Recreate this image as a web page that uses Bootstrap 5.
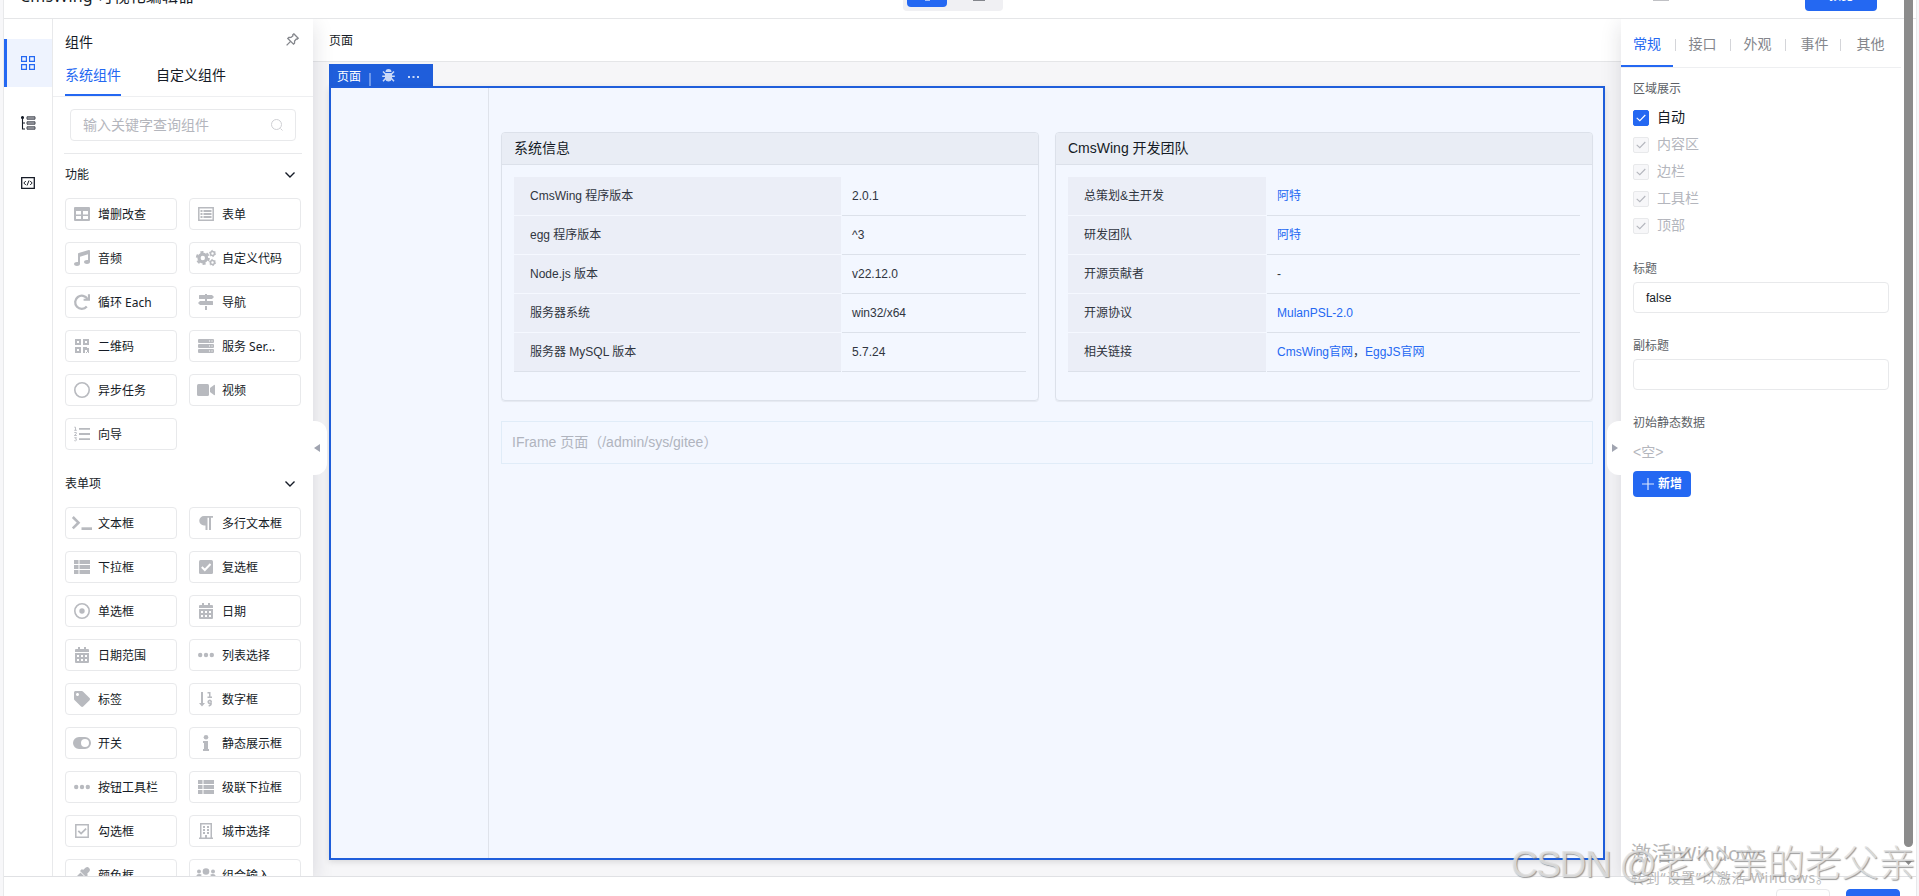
<!DOCTYPE html>
<html lang="zh-CN">
<head>
<meta charset="utf-8">
<title>CmsWing 可视化编辑器</title>
<link href="https://cdn.jsdelivr.net/npm/bootstrap@5.3.0/dist/css/bootstrap.min.css" rel="stylesheet">
<script src="https://cdn.jsdelivr.net/npm/bootstrap@5.3.0/dist/js/bootstrap.bundle.min.js" defer></script>
<style>
:root{--blue:#2468f2;--sel:#1f5edb;--line:#e8e9eb;--ink:#151b26}
html,body{height:100%;overflow:hidden}
body{font:12px/20px "Liberation Sans","Noto Sans CJK SC",sans-serif;color:var(--ink);background:#f7f7f9;padding:0 2px 0 3px}
svg{display:block;flex:none;overflow:visible}
.ui{font-family:"Noto Sans","Noto Sans CJK SC",sans-serif}
.app{height:896px;background:#fff;border-left:1px solid var(--line);border-right:1px solid var(--line)}
.topbar{height:19px;border-bottom:1px solid #e5e6e8;padding-left:16px}
.brand{font-size:16px;letter-spacing:.2px;line-height:20px;margin-top:-14px;width:883px}
.switcher{width:100px;height:32px;margin-top:-21px;padding:4px;background:#f0f0f3;border-radius:4px}
.switcher .on{width:40px;height:24px;background:var(--blue);border-radius:4px}
.glyph{width:5px;height:2px;background:#a8c2fa;margin:16px auto 0}
.switcher .off{width:12px;height:2px;background:#84868c;margin:15px 0 0 26px}
.keys{width:16px;height:2px;background:#c0c1c5;margin-left:650px;margin-top:-1px}
.publish{width:72px;height:32px;margin:-21px 0 0 136px;border-radius:4px;background:var(--blue);color:#fff;font-weight:700;line-height:34px;text-align:center}
.work{height:857px}
.rail{width:49px;border-right:1px solid var(--line);padding-top:20px}
.rail a{height:48px;margin-bottom:12px;border-left:3px solid transparent;padding-right:3px}
.rail a svg{color:var(--ink)}
.rail a.active{background:#eef3fe;border-color:var(--blue)}
.rail a.active svg{color:var(--blue)}
.side{width:260px;position:relative;z-index:2;background:#fff}
.shade{box-shadow:0 6px 20px rgba(30,30,50,.14)}
.side.shade{clip-path:inset(0 -30px 0 0)}
.props.shade{clip-path:inset(0 0 0 -30px)}
.side-in{height:857px;overflow:hidden}
.side-title{height:48px;padding:0 14px 7px 12px;font-size:14px}
.side-tabs{height:30px;gap:35px;padding:0 12px;border-bottom:1px solid #eeeff1;font-size:14px}
.side-tabs span{height:29px;line-height:16px}
.side-tabs .active{color:var(--blue);border-bottom:2px solid var(--blue)}
.finder{margin:12px 17px 0;height:32px;border:1px solid var(--line);border-radius:4px;padding:0 12px;font-size:14px;color:#b4b6bd}
.rule{height:1px;background:var(--line);margin:12px 11px 0}
.sect{height:44px;padding:0 18px 3px 12px}
.sect.two{height:45px;margin-top:12px;padding-bottom:2px}
.tiles{display:grid;grid-template-columns:112px 112px;gap:12px;padding:0 12px}
.tile{height:32px;border:1px solid var(--line);border-radius:4px;padding:1px 0 0 8px;gap:8px;color:var(--ink);white-space:nowrap}
.tile svg{width:16px;height:16px;color:#b8babf;fill:currentColor;margin-top:-2px}
.ln{fill:none!important;stroke:currentColor}
.grip{position:absolute;top:402px;width:14px;height:54px;background:#fff}
.grip.l{right:-14px;border-radius:0 12px 12px 0;z-index:3}
.grip.r{left:-14px;border-radius:12px 0 0 12px}
.grip svg{margin:23px 0 0 1px}.grip.r svg{margin-left:5px}
.stage{width:1308px;background:#f6f6f8;position:relative;z-index:1}
.crumb{height:43px;background:#fff;border-bottom:1px solid #e5e6e8;padding:1px 0 0 16px}
.seltag{width:104px;height:22px;margin:2px 0 0 16px;background:var(--sel);color:#fff;padding-left:8px}
.seltag i{width:2px;height:13px;background:#6d97ea;margin:9px 11px 0 8px}
.frame{height:774px;margin:0 16px;border:2px solid var(--sel);background:#f3f7ff;box-shadow:0 2px 6px rgba(0,0,0,.12)}
.aside{width:158px;border-right:1px solid #dfe3eb}
.content{padding:44px 10px 0 12px;flex:1}
.pair{display:grid;grid-template-columns:538px 538px;gap:16px}
.box{height:269px;border:1px solid #dce1ea;border-radius:4px;box-shadow:0 1px 1px rgba(0,0,0,.06)}
.box h2{height:32px;margin:0;padding:0 12px;border-bottom:1px solid #dce1ea;background:#e9edf5;border-radius:3px 3px 0 0;font-size:14px;line-height:31px;font-weight:400}
.info{margin:12px;display:grid;grid-template-columns:327px 184px;column-gap:1px;color:#303540}
.info.b{grid-template-columns:198px 313px}
.info>div{height:39px;line-height:39px;padding-left:10px;border-bottom:1px solid #dce1ea}
.info>div:nth-child(odd){background:#ebeef7;padding-left:16px;border-color:#f5f8ff}
.info>div:nth-last-child(2){border-color:#dce1ea!important}
.info a{color:var(--blue);text-decoration:none}
.iframe{height:43px;margin-top:20px;border:1px solid #e0ecf8;font-size:14px;line-height:41px;padding-left:10px;color:#b0b4be}
.props{width:280px;position:relative;z-index:2;background:#fff}
.ptabs{height:49px;border-bottom:1px solid #eeeff1;font-size:14px;color:#84868c}
.ptabs span{width:56px;height:48px;line-height:50px;text-align:center}
.ptabs span:first-child{width:53px;color:var(--blue);border-bottom:2px solid var(--blue)}
.ptabs i{width:1px;height:12px;margin:20px -1px 0 0;background:#d4d5d9}
.pbody{padding:0 12px;color:#5c5f66}
.chk{height:27px;gap:8px;font-size:14px;line-height:16px;padding-bottom:2px;color:#b4b6bd}
.chk b{width:16px;height:16px;border:1px solid var(--line);border-radius:2px;background:#f7f7f9;margin-top:2px}
.chk.on{color:var(--ink)}.chk.on b{background:var(--blue);border-color:var(--blue);color:#fff}
.field{height:31px;width:256px;border:1px solid var(--line);border-radius:4px;padding:0 12px;line-height:30px;color:var(--ink)}
.add{width:58px;height:26px;border-radius:4px;background:var(--blue);color:#fff;gap:4px;font-weight:700}
.scroll{width:15px;padding-left:3px}
.scroll div{width:9px;height:847px;margin-top:-19px;background:#8b8b8b;border-radius:0 0 5px 5px}
.foot{height:20px;border-top:1px solid #e0e1e4;padding:12px 16px 0 0;gap:16px;overflow:hidden}
.foot span{width:54px;height:32px;border-radius:4px;border:1px solid var(--line)}
.foot .p{background:var(--blue);border-color:var(--blue)}
.wm{position:absolute;white-space:nowrap;z-index:9}
.win1{left:1631px;top:840px;font-size:20px;letter-spacing:.5px;line-height:28px;color:#b5b5b5}
.win2{left:1631px;top:868px;font-size:14px;letter-spacing:.8px;line-height:20px;color:#b9b9b9}
.csdn{left:1511px;top:838px;font-size:37px;line-height:54px;color:rgba(226,226,226,.85);text-shadow:1px 1px 1px rgba(120,120,120,.75);font-weight:300;font-family:"Liberation Sans","Noto Sans CJK SC",sans-serif}
.csdn span{letter-spacing:-1.400px}
</style>
</head>
<body>
<svg width="0" height="0" class="position-absolute">
<symbol id="list" viewBox="0 0 16 16"><path d="M0 1h4.5v4H0zM5.5 1H16v4H5.5zM0 6h4.5v4H0zM5.5 6H16v4H5.5zM0 11h4.5v4H0zM5.5 11H16v4H5.5z"/></symbol>
<symbol id="cal" viewBox="0 0 16 16"><path fill-rule="evenodd" d="M1 5V3q0-1 1-1h2V0h2v2h4V0h2v2h2q1 0 1 1v2zM1 6h14v9q0 1-1 1H2q-1 0-1-1zM3 8v2h2V8zm4 0v2h2V8zm4 0v2h2V8zm-8 4v2h2v-2zm4 0v2h2v-2zm4 0v2h2v-2z"/></symbol>
<symbol id="dots" viewBox="0 0 16 16"><circle cx="2.2" cy="8" r="2.2"/><circle cx="8" cy="8" r="2.2"/><circle cx="13.8" cy="8" r="2.2"/></symbol>
<symbol id="down" viewBox="0 0 10 6"><path class="ln" d="M.5.5 5 5 9.500.5" stroke-width="1.4"/></symbol>
<symbol id="tick" viewBox="0 0 10 8"><path class="ln" d="M.7 3.800 3.800 6.700 9.300 1" stroke-width="1.1"/></symbol>
</svg>
<div class="app">
<header class="topbar d-flex align-items-start">
  <div class="brand ui">CmsWing 可视化编辑器</div>
  <div class="switcher d-flex"><div class="on"><div class="glyph mt-3"></div></div><div class="off mt-3"></div></div>
  <div class="keys"></div>
  <div class="publish">预览</div>
</header>
<div class="work d-flex">
  <nav class="rail">
    <a class="active d-flex align-items-center justify-content-center"><svg width="14" height="14" class="ln" stroke-width="1.200"><path d="M.6.600h4.800v4.800H.6zM8.600.600h4.800v4.800H8.600zM.6 8.600h4.800v4.800H.6zM8.600 8.600h4.800v4.800H8.600z"/></svg></a>
    <a class="d-flex align-items-center justify-content-center"><svg width="15" height="14" class="ln" stroke-width="1.100"><path d="M1.500 1v12H4M1.500 7H4"/><circle cx="1.500" cy="1.500" r="1" fill="currentColor"/><path stroke="#4a4e57" stroke-width="1" fill="#a5a7ad" d="M6 .8h8v2.400H6zM6 5.800h8v2.400H6zM6 10.800h8v2.400H6z"/></svg></a>
    <a class="d-flex align-items-center justify-content-center"><svg width="14" height="12" class="ln" stroke-width="1.300"><path d="M.7.700h12.600v10.600H.7z"/><path stroke-width="1" d="M4.800 4 2.800 6l2 2M9.200 4l2 2-2 2M8 3.500l-2 5"/></svg></a>
  </nav>
  <aside class="side shade ui">
    <div class="side-in">
    <div class="side-title d-flex align-items-center justify-content-between"><span class="mt-1">组件</span><svg width="13" height="13" class="ln" style="color:#84868c" stroke-width="1.300"><path d="M7.800.8 12.200 5.200 11 6.200 10.300 6 8.600 8 8.500 10.200 7.500 11.200 1.800 5.500 2.800 4.500 5 4.400 7 2.700 6.700 1.900zM4.600 8.400.6 12.400"/></svg></div>
    <div class="side-tabs d-flex"><span class="active">系统组件</span><span>自定义组件</span></div>
    <div class="finder d-flex align-items-center justify-content-between"><span>输入关键字查询组件</span><svg width="12" height="12" class="ln" style="color:#cfd0d4"><circle cx="5.500" cy="5.500" r="5"/><path d="m9.500 9.500 2 2"/></svg></div>
    <div class="rule"></div>
    <div class="sect d-flex align-items-center justify-content-between"><span>功能</span><svg width="10" height="6"><use href="#down"/></svg></div>
    <div class="tiles">
      <div class="tile d-flex align-items-center"><svg viewBox="0 0 16 16"><path fill-rule="evenodd" d="M1 1h14q1 0 1 1v12q0 1-1 1H1q-1 0-1-1V2q0-1 1-1zm1 4v3.500h5V5zm7 0v3.500h5V5zM2 10v3h5v-3zm7 0v3h5v-3z"/></svg>增删改查</div>
      <div class="tile d-flex align-items-center"><svg viewBox="0 0 16 16"><path class="ln" stroke-width="1.500" d="M.8 1.800h14.400v12.400H.8z"/><path d="M2.500 4h2v2h-2zM5.500 4h8v2h-8zM2.500 7h2v2h-2zM5.500 7h8v2h-8zM2.500 10h2v2h-2zM5.500 10h8v2h-8z"/></svg>表单</div>
      <div class="tile d-flex align-items-center"><svg viewBox="0 0 512 512"><path d="M511.990 32.010c0-21.710-21.100-37.010-41.600-30.510L150.400 96c-13.300 4.200-22.400 16.500-22.400 30.500v261.420c-10.050-2.380-20.720-3.920-32-3.920-53.020 0-96 28.650-96 64s42.980 64 96 64 96-28.650 96-64V214.310l256-75.020v184.630c-10.050-2.380-20.720-3.920-32-3.920-53.020 0-96 28.650-96 64s42.980 64 96 64 96-28.650 96-64z"/></svg>音频</div>
      <div class="tile d-flex align-items-center"><svg viewBox="0 0 16 16"><g class="ln"><circle cx="4.800" cy="8" r="3.800" stroke-width="3.200"/><circle cx="4.800" cy="8" r="6" stroke-width="2" stroke-dasharray="3.100 3.180"/><circle cx="14.500" cy="3.500" r="2" stroke-width="1.600"/><circle cx="14.500" cy="3.500" r="3.100" stroke-width="1" stroke-dasharray="1.600 1.650"/><circle cx="14.500" cy="12.500" r="2" stroke-width="1.600"/><circle cx="14.500" cy="12.500" r="3.100" stroke-width="1" stroke-dasharray="1.600 1.650"/></g></svg>自定义代码</div>
      <div class="tile d-flex align-items-center"><svg viewBox="0 0 16 16"><path class="ln" stroke-width="2.300" d="M13.500 5A6.600 6.600 0 1 0 12.800 12.600"/><path d="M16 .3V6.700H9.600V4.700h4.300V.3z"/></svg>循环 Each</div>
      <div class="tile d-flex align-items-center"><svg viewBox="0 0 16 16"><path d="M7 0h2v1h5l2 2-2 2H1.500Q1 5 1 4.500v-3Q1 1 1.500 1H7zM7 5h2v2h5.500q.5 0 .5.5v3q0 .5-.5.5H2L0 9l2-2h5zM7 12h2v4H7z"/></svg>导航</div>
      <div class="tile d-flex align-items-center"><svg viewBox="0 0 16 16"><path fill-rule="evenodd" d="M1 1h6v6H1zm2 2v2h2V3zM9 1h6v6H9zm2 2v2h2V3zM1 9h6v6H1zm2 2v2h2v-2zM9 9h4v1h2v4h-2v-2h-2v3H9zM12 14h1v1h-1zM14 14h1v1h-1z"/></svg>二维码</div>
      <div class="tile d-flex align-items-center"><svg viewBox="0 0 16 16"><path fill-rule="evenodd" d="M1 1h14q1 0 1 1v2q0 1-1 1H1Q0 5 0 4V2q0-1 1-1zm10 1.500v1h1v-1zm2.500 0v1h1v-1zM1 6h14q1 0 1 1v2q0 1-1 1H1q-1 0-1-1V7q0-1 1-1zm10 1.500v1h1v-1zm2.500 0v1h1v-1zM1 11h14q1 0 1 1v2q0 1-1 1H1q-1 0-1-1v-2q0-1 1-1zm10 1.500v1h1v-1zm2.500 0v1h1v-1z"/></svg>服务 Ser...</div>
      <div class="tile d-flex align-items-center"><svg viewBox="0 0 16 16"><circle class="ln" cx="8" cy="8" r="7.200" stroke-width="1.600"/></svg>异步任务</div>
      <div class="tile d-flex align-items-center"><svg viewBox="0 0 16 16"><rect x="-1" y="2" width="12" height="12" rx="1.500"/><path d="m12 6 4-3q1-.5 1 .5v9q0 1-1 .5l-4-3z"/></svg>视频</div>
      <div class="tile d-flex align-items-center"><svg viewBox="0 0 16 16"><path d="M5 2h11v1.800H5zM5 7.100h11v1.800H5zM5 12.200h11V14H5z"/><path class="ln" stroke-width=".9" d="M.3 1.200h1.200V4.300M.2 4.300h2.600M.3 6.500h2v1.300l-2 1.700h2.500M.3 11.700h2.200l-1 1.300q1.200 0 1 1.200-.5 1-2.200.4"/></svg>向导</div>
    </div>
    <div class="sect two d-flex align-items-center justify-content-between"><span>表单项</span><svg width="10" height="6"><use href="#down"/></svg></div>
    <div class="tiles">
      <div class="tile d-flex align-items-center"><svg viewBox="0 0 16 16"><path class="ln" stroke-width="2.600" d="M-1.200 2 4.500 7.700-1.200 13.400"/><path d="M7.500 12.300H18V15H7.500z"/></svg>文本框</div>
      <div class="tile d-flex align-items-center"><svg viewBox="0 0 16 16"><path d="M15 1v1.700h-2V15h-2V2.700H9.500V15h-2v-4.500H6A4.750 4.750 0 0 1 6 1z"/></svg>多行文本框</div>
      <div class="tile d-flex align-items-center"><svg><use href="#list"/></svg>下拉框</div>
      <div class="tile d-flex align-items-center"><svg viewBox="0 0 16 16"><rect x="1" y="1" width="14" height="14" rx="1.500"/><path d="m3.800 8 3 3 5.700-6" fill="none" stroke="#fff" stroke-width="2"/></svg>复选框</div>
      <div class="tile d-flex align-items-center"><svg viewBox="0 0 16 16"><circle class="ln" cx="8" cy="8" r="7.200" stroke-width="1.600"/><circle cx="8" cy="8" r="2.700"/></svg>单选框</div>
      <div class="tile d-flex align-items-center"><svg><use href="#cal"/></svg>日期</div>
      <div class="tile d-flex align-items-center"><svg><use href="#cal"/></svg>日期范围</div>
      <div class="tile d-flex align-items-center"><svg><use href="#dots"/></svg>列表选择</div>
      <div class="tile d-flex align-items-center"><svg viewBox="0 0 512 512"><path d="M0 252.118V48C0 21.490 21.490 0 48 0h204.118a48 48 0 0 1 33.941 14.059l211.882 211.882c18.745 18.745 18.745 49.137 0 67.882L293.823 497.941c-18.745 18.745-49.137 18.745-67.882 0L14.059 286.059A48 48 0 0 1 0 252.118zM112 64c-26.510 0-48 21.490-48 48s21.490 48 48 48 48-21.490 48-48-21.490-48-48-48z"/></svg>标签</div>
      <div class="tile d-flex align-items-center"><svg viewBox="0 0 16 16"><path d="M3 1h2v11h2l-3 3.500L1 12h2zM9.500 1h3v4.500H14V7H9.500V5.500H11V2.500H9.500z"/><path class="ln" stroke-width="1.600" d="M13.200 11.200a1.500 1.500 0 1 0-.2.500q.6 2.500-2.300 3.300"/></svg>数字框</div>
      <div class="tile d-flex align-items-center"><svg viewBox="0 0 16 16"><path fill-rule="evenodd" d="M5 2h6a6 6 0 0 1 0 12H5A6 6 0 0 1 5 2zm6 2a4 4 0 0 0 0 8 4 4 0 0 0 0-8z"/></svg>开关</div>
      <div class="tile d-flex align-items-center"><svg viewBox="0 0 16 16"><circle cx="8" cy="2.200" r="2.300"/><path d="M5 6h5v8h1v2H5v-2h1V8H5z"/></svg>静态展示框</div>
      <div class="tile d-flex align-items-center"><svg><use href="#dots"/></svg>按钮工具栏</div>
      <div class="tile d-flex align-items-center"><svg><use href="#list"/></svg>级联下拉框</div>
      <div class="tile d-flex align-items-center"><svg viewBox="0 0 16 16"><path class="ln" stroke-width="1.500" d="M1.800 1.800h12.400v12.400H1.800z"/><path class="ln" stroke-width="1.800" d="m4.300 7.800 2.800 2.800 5-5"/></svg>勾选框</div>
      <div class="tile d-flex align-items-center"><svg viewBox="0 0 16 16"><path fill-rule="evenodd" d="M2 0h12v14.500h1V16H1v-1.500h1zm1.500 1.500v13H7V12h2v2.500h3.500v-13z"/><path d="M5 3h2v2H5zM9 3h2v2H9zM5 6h2v2H5zM9 6h2v2H9zM5 9h2v2H5zM9 9h2v2H9z"/></svg>城市选择</div>
      <div class="tile d-flex align-items-center"><svg viewBox="0 0 16 16"><path d="M9 3 11.800.5a2.700 2.700 0 0 1 3.700 3.700L13 7l1 1-2 2-6-6 2-2zM6.500 5.500l4 4L6 14l-3 .5L1 16l-1-1 1.500-2L2 10z"/></svg>颜色框</div>
      <div class="tile d-flex align-items-center"><svg viewBox="0 0 16 16"><circle cx="8" cy="4.500" r="3.300"/><circle cx="1" cy="4.500" r="2"/><circle cx="15" cy="4.500" r="2"/><path d="M3 14q0-5 5-5t5 5zM-2 11q0-4 3-4 2 0 3 1-2 1-2 3zM18 11q0-4-3-4-2 0-3 1 2 1 2 3z"/></svg>组合输入</div>
    </div>
    </div>
    <div class="grip l"><svg width="6" height="8"><path d="M6 0v8L0 4z" fill="#a0a4b0"/></svg></div>
  </aside>
  <main class="stage">
    <div class="crumb d-flex align-items-center ui">页面</div>
    <div class="seltag d-flex align-items-center ui"><span class="mt-1">页面</span><i></i>
      <svg width="13" height="13" viewBox="0 0 13 13" fill="#c9d9f8"><path d="M3.500 3a3 3 0 0 1 6 0zM3 4h7v6q-1 2.500-3.500 2.500T3 10z"/><path fill="none" stroke="#c9d9f8" stroke-width="1.500" d="M1 2.500 3.500 5h6L12 2.500M.2 7.300h12.600M1 12.200 3.500 9.500M12 12.200 9.500 9.500"/></svg>
      <svg width="11" height="2" style="margin:4px 0 0 13px" fill="#c9d9f8"><path d="M0 0h2v2H0zM4.500 0h2v2h-2zM9 0h2v2H9z"/></svg></div>
    <div class="frame d-flex">
      <div class="aside"></div>
      <div class="content">
        <div class="pair">
          <section class="box"><h2>系统信息</h2>
            <div class="info"><div>CmsWing 程序版本</div><div>2.0.1</div><div>egg 程序版本</div><div>^3</div><div>Node.js 版本</div><div>v22.12.0</div><div>服务器系统</div><div>win32/x64</div><div>服务器 MySQL 版本</div><div>5.7.24</div></div></section>
          <section class="box"><h2>CmsWing 开发团队</h2>
            <div class="info b"><div>总策划&amp;主开发</div><div><a href="#">阿特</a></div><div>研发团队</div><div><a href="#">阿特</a></div><div>开源贡献者</div><div>-</div><div>开源协议</div><div><a href="#">MulanPSL-2.0</a></div><div>相关链接</div><div><a href="#">CmsWing官网</a>，<a href="#">EggJS官网</a></div></div></section>
        </div>
        <div class="iframe">IFrame 页面（/admin/sys/gitee）</div>
      </div>
    </div>
  </main>
  <aside class="props shade">
    <div class="grip r"><svg width="6" height="8"><path d="M0 0v8l6-4z" fill="#a0a4b0"/></svg></div>
    <div class="ptabs d-flex"><span>常规</span><i style="margin-left:2px"></i><span>接口</span><i></i><span>外观</span><i></i><span class="ps-1">事件</span><i></i><span style="width:62px">其他</span></div>
    <div class="pbody">
      <div style="padding:11px 0 5px">区域展示</div>
      <div class="chk on d-flex align-items-center"><b class="d-flex align-items-center justify-content-center"><svg width="10" height="8"><use href="#tick"/></svg></b>自动</div>
      <div class="chk d-flex align-items-center"><b class="d-flex align-items-center justify-content-center"><svg width="10" height="8"><use href="#tick"/></svg></b>内容区</div>
      <div class="chk d-flex align-items-center"><b class="d-flex align-items-center justify-content-center"><svg width="10" height="8"><use href="#tick"/></svg></b>边栏</div>
      <div class="chk d-flex align-items-center"><b class="d-flex align-items-center justify-content-center"><svg width="10" height="8"><use href="#tick"/></svg></b>工具栏</div>
      <div class="chk d-flex align-items-center"><b class="d-flex align-items-center justify-content-center"><svg width="10" height="8"><use href="#tick"/></svg></b>顶部</div>
      <div style="padding:20px 0 3px">标题</div>
      <div class="field">false</div>
      <div style="padding:23px 0 3px">副标题</div>
      <div class="field"></div>
      <div style="padding:23px 0 9px">初始静态数据</div>
      <div style="font-size:14px;color:#b4b6bd;padding-bottom:9px">&lt;空&gt;</div>
      <div class="add d-flex align-items-center justify-content-center"><svg width="12" height="12" fill="none" stroke="#dce7fd" stroke-width="1.200"><path d="M6 0v12M0 6h12"/></svg>新增</div>
    </div>
  </aside>
  <div class="scroll"><div></div><svg width="9" height="5" style="margin-top:13px"><path d="M0 0h9L4.500 5z" fill="#8b8b8b"/></svg></div>
</div>
<footer class="foot d-flex justify-content-end"><span></span><span class="p"></span></footer>
</div>
<div class="wm win1 ui">激活 Windows</div>
<div class="wm win2 ui">转到“设置”以激活 Windows。</div>
<div class="wm csdn"><span>CSDN </span>@老父亲的老父亲</div>
</body>
</html>
